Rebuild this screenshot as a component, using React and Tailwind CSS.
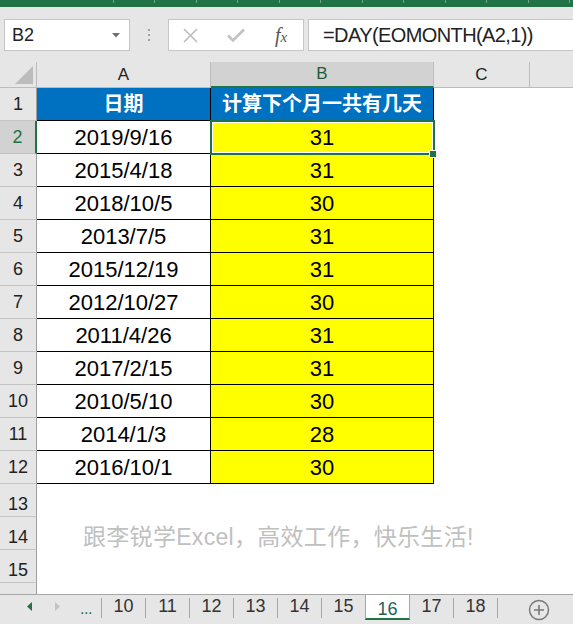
import React from 'react';

const rows = [
  ['2019/9/16', 31],
  ['2015/4/18', 31],
  ['2018/10/5', 30],
  ['2013/7/5', 31],
  ['2015/12/19', 31],
  ['2012/10/27', 30],
  ['2011/4/26', 31],
  ['2017/2/15', 31],
  ['2010/5/10', 30],
  ['2014/1/3', 28],
  ['2016/10/1', 30],
];

const tabs = ['10', '11', '12', '13', '14', '15', '16', '17', '18'];

const font = "font-['Liberation_Sans','Noto_Sans_CJK_SC',sans-serif]";

const RowHead = ({ n, active, low }) => (
  <div
    className={
      active
        ? 'w-[37px] shrink-0 flex items-center justify-center bg-[#d2d2d2] text-[#217346] border-b border-b-[#bfbfbf] border-r-2 border-r-[#217346] text-[18px]'
        : low
          ? 'w-[37px] shrink-0 flex items-center justify-center pt-[8px] bg-[#e6e6e6] text-[#222] border-b border-b-[#c4c4c4] border-r border-r-[#9f9f9f] text-[18px]'
          : 'w-[37px] shrink-0 flex items-center justify-center pt-[1px] bg-[#e6e6e6] text-[#222] border-b border-b-[#c4c4c4] border-r border-r-[#9f9f9f] text-[18px]'
    }
  >
    {n}
  </div>
);

const FormulaBar = () => (
  <div className="h-[55px] bg-[#e6e6e6] pt-[12px] pl-[4px] flex items-start">
    <div className="w-[126px] h-[32px] bg-white border border-[#c6c6c6] flex items-center pl-[7px] pr-[9px] justify-between">
      <span className="text-[18px] text-[#222]">B2</span>
      <svg width="8" height="5" viewBox="0 0 8 5">
        <polygon points="0,0 8,0 4,4.5" fill="#6f6f6f" />
      </svg>
    </div>
    <div className="w-[38px] h-[32px] flex flex-col items-center justify-center gap-[3px]">
      <span className="w-[2px] h-[2px] bg-[#a3a3a3]" />
      <span className="w-[2px] h-[2px] bg-[#a3a3a3]" />
      <span className="w-[2px] h-[2px] bg-[#a3a3a3]" />
    </div>
    <div className="w-[136px] h-[32px] bg-white border border-[#c6c6c6] flex items-center pl-[14px]">
      <svg width="15" height="15" viewBox="0 0 15 15">
        <path d="M1 1 L14 14 M14 1 L1 14" stroke="#bdbdbd" strokeWidth="1.6" fill="none" />
      </svg>
      <svg width="18" height="14" viewBox="0 0 18 14" className="ml-[29px]">
        <path d="M1 7.5 L6 12.5 L17 1.5" stroke="#c2c2c2" strokeWidth="2.6" fill="none" />
      </svg>
      <span className="ml-[30px] font-['Liberation_Serif',serif] italic text-[20px] text-[#555] leading-none">
        f<span className="text-[15px]">x</span>
      </span>
    </div>
    <div className="flex-1 ml-[4px] h-[32px] bg-white border border-r-0 border-[#c6c6c6] flex items-center pl-[14px]">
      <span className="text-[20px] tracking-[-0.6px] text-[#222]">=DAY(EOMONTH(A2,1))</span>
    </div>
  </div>
);

const ColumnHeaders = () => (
  <div className="flex h-[26px] text-[17px] text-[#222]">
    <div className="w-[37px] shrink-0 bg-[#e6e6e6] border-r border-b border-[#bcbcbc] flex items-end justify-end pr-[3px] pb-[3px]">
      <svg width="18" height="18" viewBox="0 0 18 18">
        <polygon points="18,0 18,18 0,18" fill="#bcbcbc" />
      </svg>
    </div>
    <div className="w-[174px] shrink-0 bg-[#e6e6e6] border-r border-b border-[#bcbcbc] flex items-center justify-center">A</div>
    <div className="w-[223px] shrink-0 bg-[#d2d2d2] border-r border-r-[#bcbcbc] border-b-2 border-b-[#217346] flex items-center justify-center text-[#1f5c3c]">B</div>
    <div className="w-[96px] shrink-0 bg-[#e6e6e6] border-r border-b border-[#bcbcbc] flex items-center justify-center">C</div>
    <div className="flex-1 bg-[#e6e6e6] border-b border-[#bcbcbc]" />
  </div>
);

const Sheet = () => (
  <div className="relative">
    <ColumnHeaders />

    {/* header row */}
    <div className="flex h-[33px]">
      <RowHead n={1} />
      <div className="w-[174px] shrink-0 bg-[#0070c0] border-r border-b border-black flex items-center justify-center text-white font-bold text-[20px]">
        日期
      </div>
      <div className="w-[223px] shrink-0 bg-[#0070c0] border-r border-b border-black flex items-center justify-center text-white font-bold text-[20px]">
        计算下个月一共有几天
      </div>
      <div className="flex-1 bg-white" />
    </div>

    {rows.map(([date, days], i) => (
      <div key={date} className="flex h-[33px]">
        <RowHead n={i + 2} active={i === 0} />
        <div className="w-[174px] shrink-0 bg-white border-r border-b border-black flex items-center justify-center text-[22px] text-black">
          {date}
        </div>
        <div className="w-[223px] shrink-0 bg-[#ffff00] border-r border-b border-black flex items-center justify-center text-[22px] text-black">
          {days}
        </div>
        <div className="flex-1 bg-white" />
      </div>
    ))}

    {[13, 14, 15].map((n) => (
      <div key={n} className="flex h-[33px]">
        <RowHead n={n} low />
        <div className="flex-1 bg-white flex items-center pl-[46px] pt-[8px]">
          {n === 14 && (
            <span className="whitespace-nowrap text-[23px] tracking-[0.3px] text-[#c0c0c0]">跟李锐学Excel，高效工作，快乐生活!</span>
          )}
        </div>
      </div>
    ))}

    <div className="flex h-[11px]">
      <div className="w-[37px] shrink-0 bg-[#e6e6e6] border-r border-[#9f9f9f]" />
      <div className="flex-1 bg-white" />
    </div>

    {/* active cell B2 */}
    <div className="absolute left-[210px] top-[58px] w-[225px] h-[35px] border-2 border-[#217346] shadow-[inset_0_0_0_1px_#ffffff]" />
    <div className="absolute left-[430px] top-[89px] w-[6px] h-[6px] bg-[#217346] outline outline-1 outline-white" />
  </div>
);

const TabBar = () => (
  <div className="h-[30px] bg-[#e6e6e6] border-t border-[#a6a6a6] flex items-start text-[18px] text-[#333]">
    <div className="w-[101px] h-[23px] flex items-center pl-[27px]">
      <svg width="5" height="9" viewBox="0 0 5 9">
        <polygon points="5,0 5,9 0,4.5" fill="#217346" />
      </svg>
      <svg width="5" height="9" viewBox="0 0 5 9" className="ml-[23px]">
        <polygon points="0,0 0,9 5,4.5" fill="#c3c3c3" />
      </svg>
      <span className="ml-[20px] mt-[4px] text-[#217346] text-[16px] tracking-[-0.5px] leading-none">...</span>
    </div>
    {tabs.map((t) =>
      t === '16' ? (
        <div key={t} className="w-[45px] h-[25px] bg-white border-x border-[#a6a6a6] border-b-2 border-b-[#217346] flex items-start justify-center pt-[1px] text-[#1f5f5c]">
          {t}
        </div>
      ) : (
        <React.Fragment key={t}>
          {t !== '17' && <span className="w-px h-[20px] mt-[3px] bg-[#a6a6a6]" />}
          <div className="w-[43px] h-[23px] flex items-center justify-center">{t}</div>
        </React.Fragment>
      )
    )}
    <span className="w-px h-[20px] mt-[3px] bg-[#a6a6a6]" />
    <div className="flex-1 h-[29px] flex items-center justify-end pr-[23px]">
      <svg width="22" height="22" viewBox="0 0 22 22">
        <circle cx="11" cy="11" r="9.5" stroke="#7a7a7a" strokeWidth="1.5" fill="none" />
        <path d="M11 6 V16 M6 11 H16" stroke="#7a7a7a" strokeWidth="1.6" />
      </svg>
    </div>
  </div>
);

export default function App() {
  const ticks = Array.from({ length: 12 }, (_, i) => 113 + i * 41.45);

  return (
    <div className={`w-[573px] h-[624px] overflow-hidden bg-white ${font}`}>
      <div className="relative h-[7px] bg-[#217346]">
        {ticks.map((x) => (
          <span key={x} className="absolute top-0 w-px h-[3px] bg-[#6fa487]" style={{ left: x }} />
        ))}
      </div>
      <FormulaBar />
      <Sheet />
      <TabBar />
    </div>
  );
}
